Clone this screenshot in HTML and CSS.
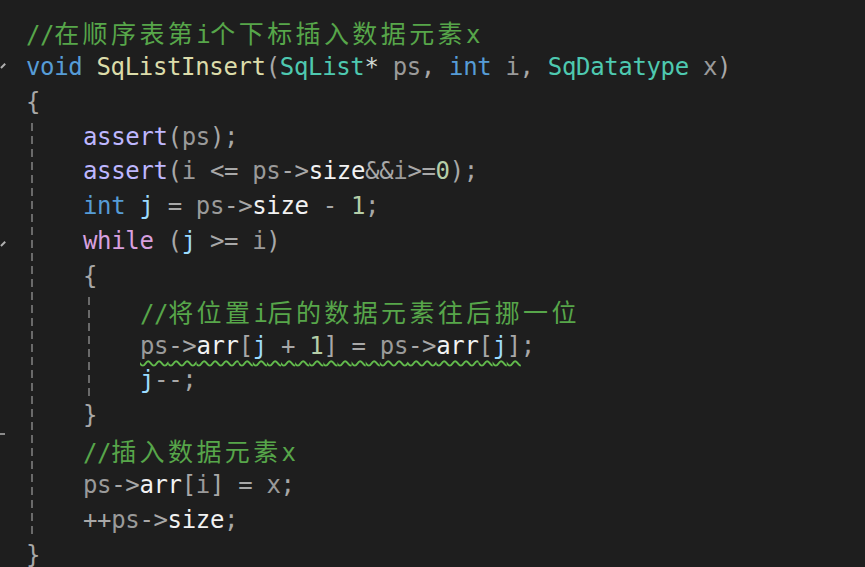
FILE: index.html
```html
<!DOCTYPE html>
<html>
<head>
<meta charset="utf-8">
<link rel="stylesheet" href="styles.css">
</head>
<body>
<div class="editor">
  <div class="line"><span class="cm">//<span class="zh">在顺序表第</span>i<span class="zh">个下标插入数据元素</span>x</span></div>
  <div class="line"><span class="fold"></span><span class="kw">void</span> <span class="fn">SqListInsert</span><span class="op">(</span><span class="ty">SqList</span><span class="st">*</span> <span class="pa">ps</span><span class="op">,</span> <span class="kw">int</span> <span class="pa">i</span><span class="op">,</span> <span class="ty">SqDatatype</span> <span class="pa">x</span><span class="op">)</span></div>
  <div class="line"><span class="op">{</span></div>
  <div class="block">
    <div class="line"><span class="mc">assert</span><span class="op">(</span><span class="pa">ps</span><span class="op">);</span></div>
    <div class="line"><span class="mc">assert</span><span class="op">(</span><span class="pa">i</span> <span class="op">&lt;=</span> <span class="pa">ps</span><span class="op">-&gt;</span><span class="mb">size</span><span class="op">&amp;&amp;</span><span class="pa">i</span><span class="op">&gt;=</span><span class="nu">0</span><span class="op">);</span></div>
    <div class="line"><span class="kw">int</span> <span class="lv">j</span> <span class="op">=</span> <span class="pa">ps</span><span class="op">-&gt;</span><span class="mb">size</span> <span class="op">-</span> <span class="nu">1</span><span class="op">;</span></div>
    <div class="line"><span class="fold fold-b"></span><span class="ctl">while</span> <span class="op">(</span><span class="lv">j</span> <span class="op">&gt;=</span> <span class="pa">i</span><span class="op">)</span></div>
    <div class="line"><span class="op">{</span></div>
    <div class="block">
      <div class="line"><span class="cm">//<span class="zh">将位置</span>i<span class="zh">后的数据元素往后挪一位</span></span></div>
      <div class="line"><span class="sq"><span class="pa">ps</span><span class="op">-&gt;</span><span class="mb">arr</span><span class="op">[</span><span class="lv">j</span> <span class="op">+</span> <span class="nu">1</span><span class="op">]</span> <span class="op">=</span> <span class="pa">ps</span><span class="op">-&gt;</span><span class="mb">arr</span><span class="op">[</span><span class="lv">j</span><span class="op">]</span></span><span class="op">;</span></div>
      <div class="line"><span class="lv">j</span><span class="op">--;</span></div>
    </div>
    <div class="line"><span class="op">}</span></div>
    <div class="line"><span class="tick"></span><span class="cm">//<span class="zh">插入数据元素</span>x</span></div>
    <div class="line"><span class="pa">ps</span><span class="op">-&gt;</span><span class="mb">arr</span><span class="op">[</span><span class="pa">i</span><span class="op">]</span> <span class="op">=</span> <span class="pa">x</span><span class="op">;</span></div>
    <div class="line"><span class="op">++</span><span class="pa">ps</span><span class="op">-&gt;</span><span class="mb">size</span><span class="op">;</span></div>
  </div>
  <div class="line"><span class="op">}</span></div>
</div>
</body>
</html>
```
FILE: styles.css
```css
html, body {
  margin: 0;
  padding: 0;
  background: #1e1e1e;
  overflow: hidden;
}

.editor {
  padding: 15px 0 0 26px;
  font-family: "DejaVu Sans Mono", monospace;
  font-size: 24px;
  letter-spacing: -0.35px;
  line-height: 34.85px;
  color: #b4b4b4;
}

.line {
  position: relative;
  height: 34.85px;
  white-space: pre;
}

.block {
  margin-left: 5px;
  padding-left: 52px;
  background-image: linear-gradient(to bottom, #6a6a6a 0, #6a6a6a 8px, transparent 8px);
  background-size: 2px 13px;
  background-repeat: repeat-y;
  background-position: 0 3px;
}

.block .block {
  margin-left: 5px;
}

.zh {
  font-family: "Noto Sans CJK SC", sans-serif;
  font-size: 25px;
  letter-spacing: 3.4px;
}

.cm { color: #57a64a; }
.kw { color: #569cd6; }
.fn { color: #dcdcaa; }
.ty { color: #4ec9b0; }
.st { color: #d0d8d4; }
.pa { color: #9a9a9a; }
.op { color: #a8a8a8; }
.mc { color: #beb7ff; }
.ctl { color: #d8a0df; }
.lv { color: #9cdcfe; }
.nu { color: #b5cea8; }
.mb { color: #f2f2f2; }

.sq {
  text-decoration-line: underline;
  text-decoration-style: wavy;
  text-decoration-color: #62bb4c;
  text-decoration-thickness: 1.6px;
  text-underline-offset: 6px;
}

.fold {
  position: absolute;
  top: 7px;
  width: 6px;
  height: 6px;
  border-right: 2px solid #b0b0b0;
  transform: rotate(45deg);
  transform-origin: 0 100%;
  left: -30px;
}

.fold-b {
  top: 11px;
  left: -87px;
}

.tick {
  position: absolute;
  left: -83px;
  top: 0px;
  width: 5px;
  height: 2px;
  background: #8a8a8a;
}
```
